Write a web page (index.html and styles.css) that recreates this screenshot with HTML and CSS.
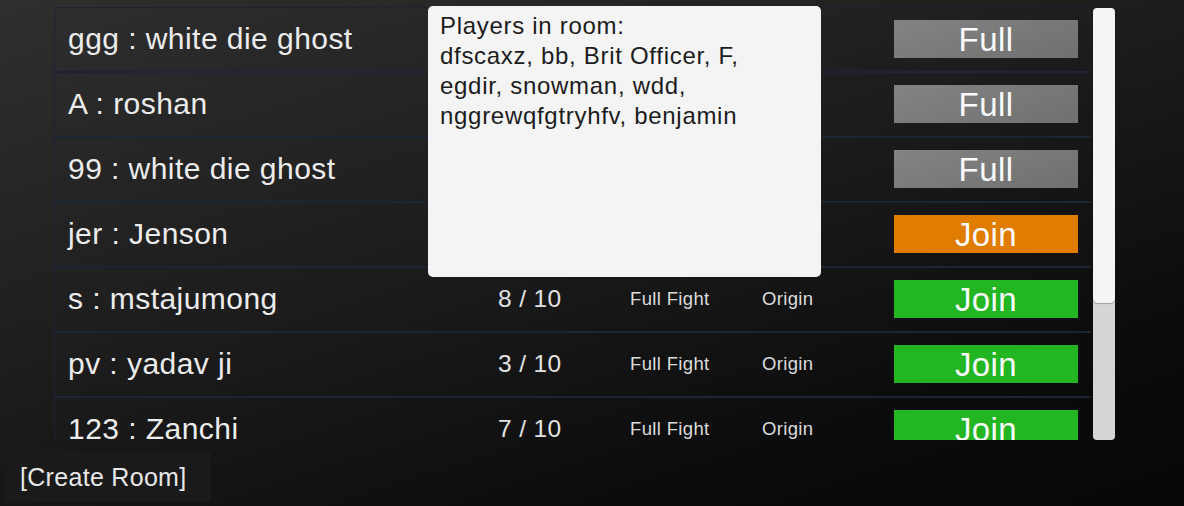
FILE: index.html
```html
<!DOCTYPE html>
<html>
<head>
<meta charset="utf-8">
<link rel="stylesheet" href="styles.css">
</head>
<body>
<div class="screen">
  <div class="lobby">
    <div class="room-list">
      <div class="room">
        <span class="name">ggg : white die ghost</span>
        <span class="count"></span>
        <span class="mode"></span>
        <span class="map"></span>
        <span class="btn full">Full</span>
      </div>
      <div class="room">
        <span class="name">A : roshan</span>
        <span class="count"></span>
        <span class="mode"></span>
        <span class="map"></span>
        <span class="btn full">Full</span>
      </div>
      <div class="room">
        <span class="name">99 : white die ghost</span>
        <span class="count"></span>
        <span class="mode"></span>
        <span class="map"></span>
        <span class="btn full">Full</span>
      </div>
      <div class="room">
        <span class="name">jer : Jenson</span>
        <span class="count"></span>
        <span class="mode"></span>
        <span class="map"></span>
        <span class="btn hover">Join</span>
      </div>
      <div class="room">
        <span class="name">s : mstajumong</span>
        <span class="count">8 / 10</span>
        <span class="mode">Full Fight</span>
        <span class="map">Origin</span>
        <span class="btn join">Join</span>
      </div>
      <div class="room">
        <span class="name">pv : yadav ji</span>
        <span class="count">3 / 10</span>
        <span class="mode">Full Fight</span>
        <span class="map">Origin</span>
        <span class="btn join">Join</span>
      </div>
      <div class="room">
        <span class="name">123 : Zanchi</span>
        <span class="count">7 / 10</span>
        <span class="mode">Full Fight</span>
        <span class="map">Origin</span>
        <span class="btn join">Join</span>
      </div>
    </div>
    <div class="scrollbar"><div class="thumb"></div></div>
    <div class="tooltip">Players in room:<br>dfscaxz, bb, Brit Officer, F,<br>egdir, snowman, wdd,<br>nggrewqfgtryhfv, benjamin</div>
  </div>
  <div class="create">[Create Room]</div>
</div>
</body>
</html>
```

FILE: styles.css
```css
html, body {
  margin: 0;
  padding: 0;
}
body {
  width: 1184px;
  height: 506px;
  overflow: hidden;
  background: linear-gradient(162deg, #2f2f2f 0%, #1c1c1c 45%, #0b0b0b 80%, #070707 100%);
  font-family: "Liberation Sans", Arial, sans-serif;
}
.screen {
  display: flex;
  flex-direction: column;
  padding-top: 7px;
}
.lobby {
  position: relative;
  display: flex;
  align-items: flex-start;
  padding-left: 54px;
}
.room-list {
  width: 1036px;
  height: 432px;
  border-top: 1px solid #1c2431;
  border-left: 1px solid #1c2431;
  overflow: hidden;
  display: flex;
  flex-direction: column;
}
.room {
  flex: 0 0 auto;
  height: 61px;
  padding-bottom: 2px;
  border-bottom: 2px solid #1b2534;
  display: grid;
  grid-template-columns: 430px 132px 132px 132px 184px;
  align-items: center;
  padding-left: 13px;
  color: #ececec;
}
.name {
  font-size: 30px;
  letter-spacing: 0.45px;
  color: #ececec;
}
.count {
  font-size: 24.5px;
  letter-spacing: 0.35px;
  color: #e2e2e2;
}
.mode, .map {
  font-size: 18.5px;
  letter-spacing: 0.35px;
  color: #dcdcdc;
}
.btn {
  height: 38px;
  line-height: 40px;
  text-align: center;
  font-size: 33px;
  letter-spacing: 0.4px;
  color: #fafafa;
}
.btn.full {
  background: linear-gradient(160deg, #838383, #707070);
}
.btn.hover {
  background: #e07c00;
}
.btn.join {
  background: #21b622;
}
.scrollbar {
  margin-left: 2px;
  margin-top: 1px;
  width: 22px;
  height: 432px;
  background: #d5d5d5;
  border-radius: 4px;
  display: flex;
  flex-direction: column;
}
.thumb {
  height: 295px;
  background: #f5f5f5;
  border-radius: 5px;
  box-shadow: 0 1px 1px rgba(0,0,0,0.25);
}
.tooltip {
  position: absolute;
  left: 428px;
  top: -1px;
  width: 381px;
  height: 266px;
  padding: 5px 0 0 12px;
  background: #f4f4f4;
  border-radius: 5px;
  color: #1c1c1c;
  font-size: 24px;
  line-height: 30px;
  letter-spacing: 0.7px;
}
.create {
  margin-top: 12px;
  margin-left: 5px;
  width: 191px;
  height: 50px;
  padding-left: 15px;
  background: #1a1a1a;
  color: #e8e8e8;
  font-size: 25px;
  letter-spacing: 0.3px;
  line-height: 50px;
}
```
